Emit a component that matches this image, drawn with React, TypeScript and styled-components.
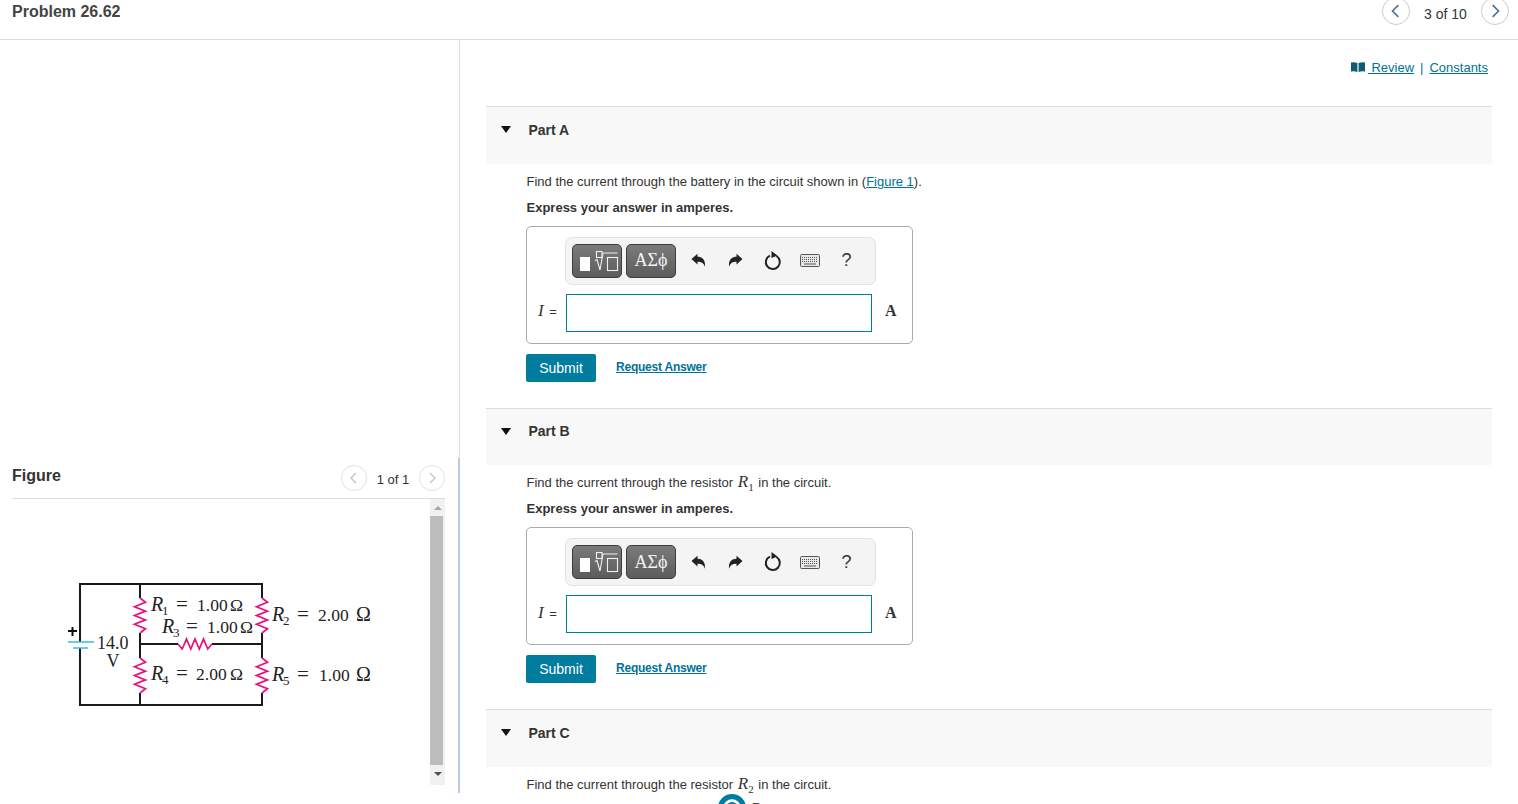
import styled, { createGlobalStyle } from 'styled-components';

const GlobalStyle = createGlobalStyle`
  html, body {
    margin: 0;
    padding: 0;
    height: 100%;
    overflow: hidden;
    background: #ffffff;
    font-family: "Liberation Sans", Arial, sans-serif;
    color: #333333;
  }
`;

const Page = styled.div`
  position: relative;
  height: 804px;
  overflow: hidden;
`;

const TopBar = styled.header`
  display: flex;
  justify-content: space-between;
  height: 39px;
  border-bottom: 1px solid #dddddd;
  padding: 0 9px 0 12px;
  overflow: hidden;
`;

const ProblemTitle = styled.h1`
  margin: 3px 0 0;
  font-size: 16px;
  line-height: 17px;
  font-weight: 700;
  color: #444444;
`;

const Pager = styled.div`
  display: flex;
  align-items: flex-start;
  margin-top: -3px;
`;

const PagerLabel = styled.span<{ $width: number; $size: number; $drop: number }>`
  width: ${p => p.$width}px;
  text-align: center;
  font-size: ${p => p.$size}px;
  line-height: 28px;
  margin-top: ${p => p.$drop}px;
  color: #333333;
`;

const RoundButton = styled.span<{ $size: number; $muted?: boolean }>`
  display: flex;
  align-items: center;
  justify-content: center;
  box-sizing: border-box;
  width: ${p => p.$size}px;
  height: ${p => p.$size}px;
  border-radius: 50%;
  border: 1px solid ${p => (p.$muted ? '#e2e2e2' : '#cccccc')};
  background: #ffffff;
  color: ${p => (p.$muted ? '#c4c4c4' : '#52718a')};
`;

const Columns = styled.div`
  display: grid;
  grid-template-columns: 460px 1fr;
  height: 753px;
`;

const LeftColumn = styled.aside`
  box-sizing: border-box;
  display: flex;
  flex-direction: column;
  justify-content: flex-end;
  border-right: 1px solid #dddddd;
`;

const FigurePanel = styled.section`
  box-sizing: border-box;
  height: 335px;
  margin-right: -1px;
  border-right: 2px solid #bccbdd;
  padding: 0 13px 8px 12px;
`;

const FigureHeader = styled.div`
  display: flex;
  justify-content: space-between;
  align-items: center;
  box-sizing: border-box;
  height: 41px;
  padding-bottom: 4px;
  border-bottom: 1px solid #dddddd;
`;

const FigureTitle = styled.h2`
  margin: 0;
  font-size: 16px;
  font-weight: 700;
  color: #333333;
`;

const FigurePager = styled.div`
  display: flex;
  align-items: center;
  margin-top: 3px;
`;

const FigureBody = styled.div`
  display: flex;
  justify-content: space-between;
  height: 286px;
`;

const CircuitHolder = styled.div`
  padding: 76px 0 0 48px;
`;

const ScrollTrack = styled.div`
  display: flex;
  flex-direction: column;
  align-items: flex-start;
  width: 15px;
  background: #f1f1f1;
`;

const ScrollArrow = styled.span<{ $down?: boolean }>`
  width: 0;
  height: 0;
  margin: 7px 0 0 3.5px;
  border-left: 4px solid transparent;
  border-right: 4px solid transparent;
  ${p => (p.$down ? 'border-top: 4px solid #505050;' : 'border-bottom: 4px solid #a8a8a8;')}
`;

const ScrollThumb = styled.div`
  width: 13px;
  height: 249px;
  margin-top: 6px;
  background: #bcbcbc;
`;

const RightColumn = styled.main`
  box-sizing: border-box;
  padding: 0 26px;
  height: 753px;
  overflow: hidden;
`;

const LinkRow = styled.div`
  display: flex;
  justify-content: flex-end;
  align-items: center;
  gap: 6px;
  box-sizing: border-box;
  height: 66.3px;
  padding: 0 4px 12px 0;
  font-size: 13px;
  color: #007398;
`;

const ReviewGroup = styled.span`
  display: flex;
  align-items: center;
  gap: 3px;
`;

const TextLink = styled.a`
  color: #007398;
  text-decoration: underline;
`;

const PartHeader = styled.div`
  display: flex;
  align-items: center;
  box-sizing: border-box;
  height: 57.5px;
  padding: 0 0 11.5px 14.5px;
  background: #f8f8f8;
  border-top: 1px solid #dddddd;
`;

const Caret = styled.span`
  width: 0;
  height: 0;
  margin-right: 18px;
  border-left: 5.5px solid transparent;
  border-right: 5.5px solid transparent;
  border-top: 7px solid #111111;
`;

const PartTitle = styled.h3`
  margin: 0;
  font-size: 14px;
  font-weight: 700;
  color: #333333;
`;

const PartBody = styled.div`
  padding: 8.9px 0 26px 40.5px;
`;

const Question = styled.p`
  margin: 0;
  height: 18px;
  font-size: 13px;
  line-height: 18px;
  color: #333333;
`;

const Hint = styled.p`
  margin: 8px 0 9.1px;
  font-size: 13px;
  line-height: 18px;
  font-weight: 700;
  color: #333333;
`;

const MathVar = styled.i`
  margin: 0 1px;
  font-family: "Liberation Serif", serif;
  font-size: 17px;
  line-height: 0;
  sub {
    font-style: normal;
    font-size: 11px;
    line-height: 0;
  }
`;

const AnswerBox = styled.div`
  box-sizing: border-box;
  width: 387px;
  height: 118px;
  margin-left: -0.5px;
  border: 1px solid #aaaaaa;
  border-radius: 5px;
  padding: 10px 0 0 11px;
`;

const Toolbar = styled.div`
  display: flex;
  align-items: center;
  box-sizing: border-box;
  width: 311px;
  height: 48px;
  margin-left: 27px;
  padding-left: 6px;
  background: #f4f4f4;
  border: 1px solid #e2e2e2;
  border-radius: 7px;
`;

const ToolButton = styled.span`
  display: flex;
  align-items: center;
  justify-content: center;
  box-sizing: border-box;
  width: 50px;
  height: 34px;
  margin-right: 4px;
  border: 1px solid #3c3c3c;
  border-radius: 5px;
  background: linear-gradient(#7b7b7b, #5c5c5c);
  color: #f4f4f4;
  font-family: "Liberation Serif", serif;
  font-size: 18px;
`;

const ToolIcon = styled.span`
  display: flex;
  align-items: center;
  justify-content: center;
  width: 37px;
  height: 34px;
  color: #333333;
  font-size: 18px;
`;

const InputRow = styled.div`
  display: flex;
  align-items: center;
  margin-top: 9px;
`;

const InputLabel = styled.span`
  width: 28px;
  padding-bottom: 3px;
  font-size: 13px;
  color: #333333;
  i {
    font-family: "Liberation Serif", serif;
    font-size: 17px;
    margin-right: 2px;
  }
`;

const AnswerInput = styled.span`
  box-sizing: border-box;
  display: block;
  width: 306px;
  height: 38px;
  border: 1px solid #007c9e;
  background: #ffffff;
`;

const Unit = styled.span`
  margin-left: 13px;
  padding-bottom: 3px;
  font-family: "Liberation Serif", serif;
  font-size: 16px;
  font-weight: 700;
  color: #333333;
`;

const Actions = styled.div`
  display: flex;
  align-items: flex-start;
  gap: 20px;
  margin: 10px 0 0 -0.5px;
`;

const SubmitButton = styled.span`
  display: flex;
  align-items: center;
  justify-content: center;
  width: 70px;
  height: 28px;
  border-radius: 2px;
  background: #007c9e;
  color: #ffffff;
  font-size: 14px;
`;

const RequestLink = styled.a`
  margin-top: 5px;
  color: #007398;
  font-size: 12px;
  letter-spacing: -0.22px;
  line-height: 16px;
  font-weight: 700;
  text-decoration: underline;
`;

const FloatingBadge = styled.div`
  position: absolute;
  left: 718px;
  top: 794px;
  display: flex;
  gap: 5px;
`;

const BadgeCircle = styled.span`
  box-sizing: border-box;
  width: 28px;
  height: 28px;
  border-radius: 50%;
  border: 5px solid #007c9e;
  background: #ffffff;
  box-shadow: inset 0 0 0 3px #ffffff, inset 0 0 0 9px #007c9e;
`;

const BadgeLetter = styled.i`
  margin-top: 6px;
  font-family: "Liberation Serif", serif;
  font-size: 16px;
  color: #333333;
`;

const CircuitText = styled.text<{ $size?: number }>`
  font-family: "Liberation Serif", serif;
  font-size: ${p => p.$size ?? 18}px;
  fill: #222222;
`;

const Chevron = ({ left, size }: { left?: boolean; size: number }) => (
  <svg width={size} height={size} viewBox="0 0 12 12" fill="none" stroke="currentColor" strokeWidth="1.4">
    <path d={left ? 'M8 1 L3 6 L8 11' : 'M4 1 L9 6 L4 11'} />
  </svg>
);

const BookIcon = () => (
  <svg width="14" height="10" viewBox="0 0 14 10">
    <path fill="#0b5c74" d="M0 0.500 Q3.500 0 6.400 1 V10 Q3.500 9 0 9.500 Z M7.600 1 Q10.500 0 14 0.500 V9.500 Q10.500 9 7.600 10 Z" />
  </svg>
);

const TemplateIcon = () => (
  <svg width="48" height="32" viewBox="1 1 48 32">
    <rect x="8" y="13" width="10" height="14" fill="#ffffff" />
    <g fill="none" stroke="#f0f0f0" strokeWidth="1.1">
      <rect x="24.500" y="7.500" width="5.500" height="6" />
      <path d="M23 16.500 L25 15.500 L28 26 L31 9 H45.500" />
      <rect x="35.500" y="13.500" width="10" height="13" />
    </g>
  </svg>
);

const ArrowIcon = ({ flip }: { flip?: boolean }) => (
  <svg width="15" height="15" viewBox="0 0 15 15" style={flip ? { transform: 'scaleX(-1)' } : undefined}>
    <path fill="#222222" d="M0.500 6 L6.500 0.800 V3.800 C11 3.800 14.600 6.500 14 13.800 C12.800 10.400 10.500 8.600 6.500 8.800 V11.600 Z" />
  </svg>
);

const ResetIcon = () => (
  <svg width="18" height="20" viewBox="0 0 18 20" fill="none">
    <path d="M6 4.600 A7 7 0 1 0 12.400 5" stroke="#222222" strokeWidth="2" />
    <path d="M7.500 0 L13.500 4.400 L7.500 7 Z" fill="#222222" />
  </svg>
);

const KeyboardIcon = () => (
  <svg width="20" height="13" viewBox="0 0 20 13">
    <rect x="0.500" y="0.500" width="19" height="12" rx="1" fill="#e8e8e8" stroke="#555555" />
    <path stroke="#555555" strokeWidth="1" strokeDasharray="1 1" d="M2 3.500 H18 M2 5.500 H18 M2 7.500 H18" />
    <path stroke="#555555" strokeWidth="1" d="M4 10 H16" />
  </svg>
);

// 4 peaks on one side, 3 on the other, wire ends on the centre line
const zigzag = (x: number, y: number, length: number, amp: number, horizontal?: boolean) => {
  const step = length / 8;
  const points: string[] = [];
  for (let i = 0; i <= 8; i++) {
    const along = i * step;
    const off = i === 0 || i === 8 ? 0 : i % 2 ? amp : -amp;
    points.push(horizontal ? `${x + along},${y + off}` : `${x + off},${y + along}`);
  }
  return points.join(' ');
};

const resistors = [
  { x: 140, y: 598 },
  { x: 262, y: 598 },
  { x: 140, y: 658 },
  { x: 262, y: 658 },
];

const labels = [
  { sub: '1', x: 151, y: 611, eq: 176, valX: 197, val: '1.00', ohmX: 230, ohm: 17.5 },
  { sub: '3', x: 162, y: 633, eq: 186, valX: 207, val: '1.00', ohmX: 240, ohm: 17.5 },
  { sub: '2', x: 272, y: 621, eq: 297, valX: 318, val: '2.00', ohmX: 356, ohm: 20 },
  { sub: '4', x: 151, y: 680, eq: 176, valX: 196, val: '2.00', ohmX: 230, ohm: 17.5 },
  { sub: '5', x: 272, y: 681, eq: 297, valX: 319, val: '1.00', ohmX: 356, ohm: 20 },
];

const Circuit = () => (
  <svg width="320" height="140" viewBox="60 575 320 140" style={{ display: 'block' }}>
    <g fill="none" stroke="#1a1a1a" strokeWidth="2">
      <path d="M80 642 V584 H262 V598 M262 633 V658 M262 693 V705 H80 V648" />
      <path d="M140 584 V598 M140 633 V658 M140 693 V705" />
      <path d="M140 644 H178 M212 644 H262" />
    </g>
    <g fill="none" stroke="#e5127f" strokeWidth="1.7">
      {resistors.map(r => (
        <polyline key={`${r.x}-${r.y}`} points={zigzag(r.x, r.y, 35, 5.5)} />
      ))}
      <polyline points={zigzag(178, 644, 34, 5, true)} />
    </g>
    <path d="M68 642 H94 M73 648 H88" stroke="#35bfe6" strokeWidth="1.6" fill="none" />
    <path d="M68 631 H77 M72.500 627 V636" stroke="#111111" strokeWidth="2" fill="none" />
    <CircuitText x="97" y="649">14.0</CircuitText>
    <CircuitText x="106.5" y="667">V</CircuitText>
    {labels.map(l => (
      <g key={l.sub}>
        <CircuitText x={l.x} y={l.y} $size={20} fontStyle="italic">R</CircuitText>
        <CircuitText x={l.x + 11} y={l.y + 4} $size={13}>{l.sub}</CircuitText>
        <CircuitText x={l.eq} y={l.y} $size={21}>=</CircuitText>
        <CircuitText x={l.valX} y={l.y} $size={17.5}>{l.val}</CircuitText>
        <CircuitText x={l.ohmX} y={l.y} $size={l.ohm}>Ω</CircuitText>
      </g>
    ))}
  </svg>
);

const Answer = () => (
  <>
    <Hint>Express your answer in amperes.</Hint>
    <AnswerBox>
      <Toolbar>
        <ToolButton><TemplateIcon /></ToolButton>
        <ToolButton>ΑΣϕ</ToolButton>
        <ToolIcon><ArrowIcon /></ToolIcon>
        <ToolIcon><ArrowIcon flip /></ToolIcon>
        <ToolIcon><ResetIcon /></ToolIcon>
        <ToolIcon><KeyboardIcon /></ToolIcon>
        <ToolIcon>?</ToolIcon>
      </Toolbar>
      <InputRow>
        <InputLabel><i>I</i> =</InputLabel>
        <AnswerInput />
        <Unit>A</Unit>
      </InputRow>
    </AnswerBox>
    <Actions>
      <SubmitButton>Submit</SubmitButton>
      <RequestLink href="#">Request Answer</RequestLink>
    </Actions>
  </>
);

const PartHead = ({ name }: { name: string }) => (
  <PartHeader>
    <Caret />
    <PartTitle>{name}</PartTitle>
  </PartHeader>
);

export default function App() {
  return (
    <Page>
      <GlobalStyle />
      <TopBar>
        <ProblemTitle>Problem 26.62</ProblemTitle>
        <Pager>
          <RoundButton $size={28}><Chevron left size={14} /></RoundButton>
          <PagerLabel $width={71} $size={14} $drop={3}>3 of 10</PagerLabel>
          <RoundButton $size={28}><Chevron size={14} /></RoundButton>
        </Pager>
      </TopBar>
      <Columns>
        <LeftColumn>
          <FigurePanel>
            <FigureHeader>
              <FigureTitle>Figure</FigureTitle>
              <FigurePager>
                <RoundButton $size={26} $muted><Chevron left size={12} /></RoundButton>
                <PagerLabel $width={52} $size={13} $drop={4}>1 of 1</PagerLabel>
                <RoundButton $size={26} $muted><Chevron size={12} /></RoundButton>
              </FigurePager>
            </FigureHeader>
            <FigureBody>
              <CircuitHolder><Circuit /></CircuitHolder>
              <ScrollTrack>
                <ScrollArrow />
                <ScrollThumb />
                <ScrollArrow $down />
              </ScrollTrack>
            </FigureBody>
          </FigurePanel>
        </LeftColumn>
        <RightColumn>
          <LinkRow>
            <ReviewGroup>
              <BookIcon />
              <TextLink href="#">&nbsp;Review</TextLink>
            </ReviewGroup>
            <span>|</span>
            <TextLink href="#">Constants</TextLink>
          </LinkRow>
          <PartHead name="Part A" />
          <PartBody>
            <Question>
              Find the current through the battery in the circuit shown in (<TextLink href="#">Figure 1</TextLink>).
            </Question>
            <Answer />
          </PartBody>
          <PartHead name="Part B" />
          <PartBody>
            <Question>
              Find the current through the resistor <MathVar>R<sub>1</sub></MathVar> in the circuit.
            </Question>
            <Answer />
          </PartBody>
          <PartHead name="Part C" />
          <PartBody>
            <Question>
              Find the current through the resistor <MathVar>R<sub>2</sub></MathVar> in the circuit.
            </Question>
          </PartBody>
        </RightColumn>
      </Columns>
      <FloatingBadge>
        <BadgeCircle />
        <BadgeLetter>R</BadgeLetter>
      </FloatingBadge>
    </Page>
  );
}
